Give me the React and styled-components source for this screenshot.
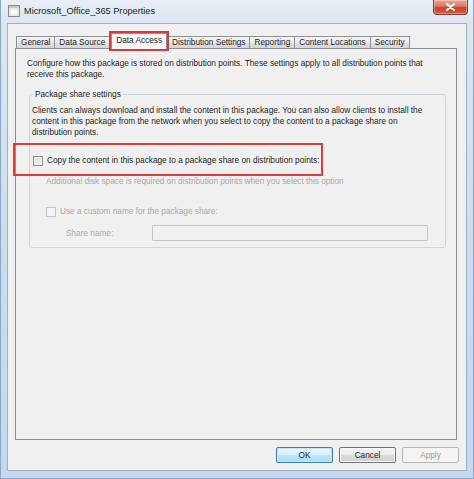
import React from "react";
import styled, { createGlobalStyle } from "styled-components";

const Global = createGlobalStyle`
  html, body { margin: 0; padding: 0; background: #ffffff; overflow: hidden; }
  body { font-family: "Liberation Sans", Arial, sans-serif; }
  * { box-sizing: border-box; }
`;

const Window = styled.div`
  width: 474px;
  height: 479px;
  display: flex;
  flex-direction: column;
  padding: 0 6px 7px 6px;
  border: 1px solid #8ea7c4;
  border-top: none;
  background: linear-gradient(180deg, #e8eef5 0px, #dce6f1 22px, #c9dbef 60%, #c4d8ef 100%);
`;

const TitleBar = styled.div`
  height: 23px;
  display: flex;
  align-items: flex-start;
  flex: none;
`;

const TitleIcon = styled.svg`
  width: 12px;
  height: 12px;
  margin: 5px 0 0 1px;
  flex: none;
`;

const TitleText = styled.div`
  font-size: 9.2px;
  line-height: 11px;
  color: #1c1c1c;
  margin: 6px 0 0 4px;
  white-space: nowrap;
`;

const CloseButton = styled.div`
  margin-left: auto;
  margin-right: -1px;
  width: 35px;
  height: 15px;
  border: 1px solid #8b3b2f;
  border-top: none;
  border-radius: 0 0 4px 4px;
  background: linear-gradient(180deg, #eaa898 0%, #db7560 45%, #c8432a 55%, #d45a40 100%);
  box-shadow: inset 0 0 0 1px rgba(255, 255, 255, 0.35);
  display: flex;
  align-items: center;
  justify-content: center;
`;

const Client = styled.div`
  flex: 1;
  display: flex;
  flex-direction: column;
  background: #f0f0f0;
  border: 1px solid #9db1c8;
  padding: 9px 9px 7px 7px;
  min-height: 0;
`;

const TabStrip = styled.div`
  display: flex;
  align-items: flex-end;
  height: 15px;
  padding-left: 1px;
  flex: none;
  position: relative;
  z-index: 1;
`;

const Tab = styled.div`
  font-size: 8.25px;
  color: #1e1e1e;
  white-space: nowrap;
  border: 1px solid #8e9198;
  border-bottom: none;
  margin-left: -1px;
  display: flex;
  align-items: center;
  ${(p) =>
    p.$active
      ? `
    height: 16px;
    margin-bottom: -1px;
    margin-left: 1px;
    margin-right: 1px;
    padding: 0 4px 2px 4px;
    background: #f8f8f8;
    position: relative;
    z-index: 2;
    outline: 2px solid #dc3a3a;
    outline-offset: 0px;
  `
      : `
    height: 12px;
    padding: 0 4px;
    background: linear-gradient(180deg, #f4f4f4 0%, #ececec 50%, #dfdfdf 51%, #d6d6d6 100%);
  `}
  &:first-child { margin-left: 0; }
`;

const Panel = styled.div`
  flex: 1;
  min-height: 0;
  border: 1px solid #8e9198;
  background: #f0f0f0;
  padding: 9px 10px 0 11px;
  font-size: 8.25px;
  line-height: 11px;
  color: #1e1e1e;
`;

const Paragraph = styled.p`
  margin: 0;
  white-space: nowrap;
`;

const Group = styled.fieldset`
  margin: 9px 0 0 2px;
  padding: 5px 2px 6px 2px;
  border: 1px solid #d0d7dc;
  border-radius: 3px;
  min-inline-size: 0;
`;

const Legend = styled.legend`
  padding: 0 2px;
  margin-left: 1px;
  line-height: 11px;
`;

const CheckRow = styled.label`
  position: relative;
  display: flex;
  width: fit-content;
  align-items: center;
  gap: 4px;
  margin: ${(p) => p.$m};
  color: ${(p) => (p.$disabled ? "#a9a9a9" : "#1e1e1e")};
  white-space: nowrap;
  ${(p) =>
    p.$highlight &&
    `
    &::before {
      content: "";
      position: absolute;
      left: -20px;
      right: -4px;
      top: -11px;
      bottom: -10px;
      border: 2px solid #db3d3d;
      pointer-events: none;
    }
  `}
`;

const Box = styled.span`
  width: 10px;
  height: 10px;
  flex: none;
  margin-top: 2px;
  border: 1px solid ${(p) => (p.$disabled ? "#c4c4c4" : "#8f8f8f")};
  background: ${(p) =>
    p.$disabled
      ? "#f4f4f4"
      : "linear-gradient(135deg, #dedede 0%, #f6f6f6 100%)"};
  box-shadow: inset 0 0 0 1px #f4f4f4;
`;

const Note = styled.div`
  margin: 10px 0 0 14px;
  color: #a9a9a9;
  white-space: nowrap;
`;

const FieldRow = styled.div`
  display: flex;
  align-items: center;
  margin: 8px 0 0 34px;
`;

const FieldLabel = styled.span`
  width: 86px;
  color: #a9a9a9;
  flex: none;
`;

const TextBox = styled.div`
  width: 276px;
  height: 16px;
  border: 1px solid #c3c7cb;
  border-radius: 1px;
  background: #f0f0f0;
`;

const ButtonRow = styled.div`
  display: flex;
  justify-content: flex-end;
  gap: 6px;
  margin: 7px -2px 0 0;
  flex: none;
`;

const Button = styled.div`
  width: 57px;
  height: 16px;
  border-radius: 2px;
  font-size: 8.25px;
  display: flex;
  align-items: center;
  justify-content: center;
  ${(p) =>
    p.$variant === "default"
      ? `
    border: 1px solid #3c7fb1;
    color: #1e1e1e;
    background: linear-gradient(180deg, #eaf6fd 0%, #d9f0fc 50%, #bee6fd 51%, #a7d9f5 100%);
    box-shadow: inset 0 0 0 1px #c6e6f8;
  `
      : p.$variant === "disabled"
      ? `
    border: 1px solid #b5b9bd;
    color: #9a9a9a;
    background: #f4f4f4;
  `
      : `
    border: 1px solid #707070;
    color: #1e1e1e;
    background: linear-gradient(180deg, #f2f2f2 0%, #ebebeb 50%, #dddddd 51%, #cfcfcf 100%);
    box-shadow: inset 0 0 0 1px #fbfbfb;
  `}
`;

const tabs = [
  "General",
  "Data Source",
  "Data Access",
  "Distribution Settings",
  "Reporting",
  "Content Locations",
  "Security",
];

export default function App() {
  return (
    <>
      <Global />
      <Window>
        <TitleBar>
          <TitleIcon viewBox="0 0 12 12">
            <rect x="0.5" y="0.5" width="11" height="11" fill="#f4f4f4" stroke="#8a8a8a" />
            <rect x="1" y="1" width="10" height="2" fill="#c9c9c9" />
            <rect x="2" y="4" width="8" height="6" fill="#ffffff" stroke="#bdbdbd" strokeWidth="0.5" />
          </TitleIcon>
          <TitleText>Microsoft_Office_365 Properties</TitleText>
          <CloseButton>
            <svg width="9" height="8" viewBox="0 0 9 8">
              <path d="M1 1 L8 7 M8 1 L1 7" stroke="#ffffff" strokeWidth="2" strokeLinecap="round" />
            </svg>
          </CloseButton>
        </TitleBar>
        <Client>
          <TabStrip>
            {tabs.map((t) => (
              <Tab key={t} $active={t === "Data Access"}>
                {t}
              </Tab>
            ))}
          </TabStrip>
          <Panel>
            <Paragraph>
              Configure how this package is stored on distribution points. These settings apply to all distribution points that
              <br />
              receive this package.
            </Paragraph>
            <Group>
              <Legend>Package share settings</Legend>
              <Paragraph>
                Clients can always download and install the content in this package. You can also allow clients to install the
                <br />
                content in this package from the network when you select to copy the content to a package share on
                <br />
                distribution points.
              </Paragraph>
              <CheckRow $highlight $m="16px 0 0 1px">
                <Box />
                Copy the content in this package to a package share on distribution points:
              </CheckRow>
              <Note>Additional disk space is required on distribution points when you select this option</Note>
              <CheckRow $disabled $m="18px 0 0 14px">
                <Box $disabled />
                Use a custom name for the package share:
              </CheckRow>
              <FieldRow>
                <FieldLabel>Share name:</FieldLabel>
                <TextBox />
              </FieldRow>
            </Group>
          </Panel>
          <ButtonRow>
            <Button $variant="default">OK</Button>
            <Button>Cancel</Button>
            <Button $variant="disabled">Apply</Button>
          </ButtonRow>
        </Client>
      </Window>
    </>
  );
}
